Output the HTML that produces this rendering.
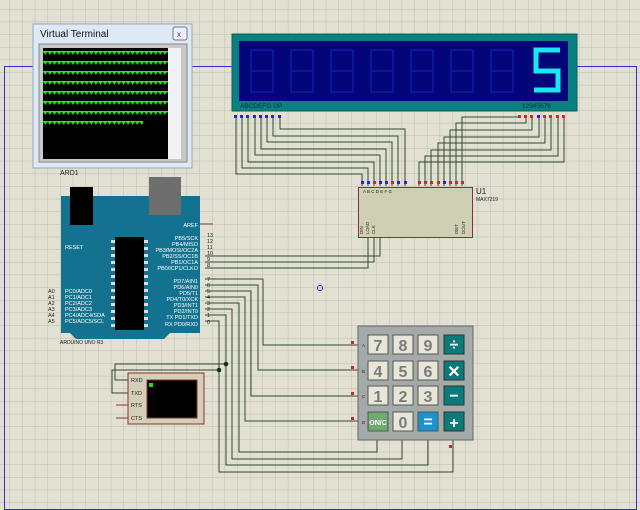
<!DOCTYPE html><html><head><style>body{margin:0;width:640px;height:510px;overflow:hidden;background:#e1e0d2}svg{display:block}text{font-family:"Liberation Sans",sans-serif}</style></head><body>
<svg width="640" height="510" viewBox="0 0 640 510" xmlns="http://www.w3.org/2000/svg">
<defs><pattern id="g" x="9.5" y="9" width="12.65" height="12.65" patternUnits="userSpaceOnUse"><path d="M0 0H12.65M0 0V12.65" stroke="#bdbdb0" stroke-width="1" fill="none"/></pattern>
<pattern id="t" x="43" y="0" width="4.6" height="10" patternUnits="userSpaceOnUse"><rect x="0" y="0" width="4.6" height="2.2" fill="#22ee22"/><polygon points="0.3,2 4.3,2 2.3,5" fill="#22dd22"/></pattern></defs>
<rect width="640" height="510" fill="#e1e0d2"/><rect width="640" height="510" fill="url(#g)"/>
<path d="M4.5 510V66.5H636.5V509.5H4" stroke="#3030d0" fill="none"/>
<!-- 7seg -->
<rect x="232" y="34" width="345" height="77" fill="#0b8080" stroke="#08605f"/>
<rect x="239" y="41" width="329" height="60" fill="#05057a"/>
<g fill="none" stroke="#0b169a" stroke-width="2">
<path d="M251 50h22v21h-22zM251 71h22v21h-22z"/><path d="M291 50h22v21h-22zM291 71h22v21h-22z"/><path d="M331 50h22v21h-22zM331 71h22v21h-22z"/><path d="M371 50h22v21h-22zM371 71h22v21h-22z"/><path d="M411 50h22v21h-22zM411 71h22v21h-22z"/><path d="M451 50h22v21h-22zM451 71h22v21h-22z"/><path d="M491 50h22v21h-22zM491 71h22v21h-22z"/></g>
<path d="M560 50H536V71H558V90H534" stroke="#18e8f0" stroke-width="5" fill="none"/>
<text x="240" y="108" font-size="6.5" fill="#003030">ABCDEFG  DP</text><text x="522" y="108" font-size="6.5" fill="#003030">12345678</text>
<g stroke="#2f4a2f" fill="none" stroke-width="1">
<path d="M236 117V174H362V186"/><path d="M242 117V168H368V186"/><path d="M248 117V162H374V186"/><path d="M255 117V155H380V186"/><path d="M261 117V149H386V186"/><path d="M267 117V142H392V186"/><path d="M273 117V136H398V186"/><path d="M280 117V129H405V186"/>
<path d="M419 186V162H564V117"/><path d="M425 186V156H558V117"/><path d="M431 186V150H551V117"/><path d="M438 186V143H545V117"/><path d="M444 186V137H539V117"/><path d="M450 186V130H532V117"/><path d="M456 186V123H526V117"/><path d="M462 186V117H520"/>
</g>
<g fill="#2020ff"><rect x="234" y="115" width="3" height="3"/><rect x="240" y="115" width="3" height="3"/><rect x="246" y="115" width="3" height="3"/><rect x="253" y="115" width="3" height="3"/><rect x="259" y="115" width="3" height="3"/><rect x="265" y="115" width="3" height="3"/><rect x="271" y="115" width="3" height="3"/><rect x="278" y="115" width="3" height="3"/></g>
<g fill="#e02020"><rect x="518" y="115" width="3" height="3"/><rect x="524" y="115" width="3" height="3"/><rect x="530" y="115" width="3" height="3"/><rect x="543" y="115" width="3" height="3"/><rect x="549" y="115" width="3" height="3"/><rect x="556" y="115" width="3" height="3"/><rect x="562" y="115" width="3" height="3"/></g>
<rect x="537" y="115" width="3" height="3" fill="#2020ff"/>
<!-- MAX7219 -->
<rect x="358.5" y="187.5" width="114" height="50" fill="#cfcfb4" stroke="#8a3030"/>
<text x="476" y="194" font-size="8" fill="#222">U1</text><text x="476" y="201" font-size="5" fill="#222">MAX7219</text>
<text x="363" y="193" font-size="4.5" fill="#222">A B C D E F G</text>
<text x="363" y="234" font-size="4.5" fill="#222" transform="rotate(-90 363 234)">DIN</text>
<text x="369" y="234" font-size="4.5" fill="#222" transform="rotate(-90 369 234)">LOAD</text>
<text x="375" y="234" font-size="4.5" fill="#222" transform="rotate(-90 375 234)">CLK</text>
<text x="458" y="234" font-size="4.5" fill="#222" transform="rotate(-90 458 234)">ISET</text>
<text x="465" y="234" font-size="4.5" fill="#222" transform="rotate(-90 465 234)">DOUT</text>
<g fill="#2020ff"><rect x="361" y="181" width="3" height="3"/><rect x="367" y="181" width="3" height="3"/><rect x="379" y="181" width="3" height="3"/><rect x="385" y="181" width="3" height="3"/><rect x="397" y="181" width="3" height="3"/><rect x="404" y="181" width="3" height="3"/><rect x="443" y="181" width="3" height="3"/></g>
<g fill="#e02020"><rect x="373" y="181" width="3" height="3"/><rect x="391" y="181" width="3" height="3"/><rect x="418" y="181" width="3" height="3"/><rect x="424" y="181" width="3" height="3"/><rect x="430" y="181" width="3" height="3"/><rect x="437" y="181" width="3" height="3"/><rect x="449" y="181" width="3" height="3"/><rect x="455" y="181" width="3" height="3"/><rect x="461" y="181" width="3" height="3"/></g>
<g stroke="#2f4a2f" fill="none">
<path d="M205 256H380V237"/><path d="M205 262H374V237"/><path d="M205 268H368V237"/>
<path d="M205 279H263V345H358"/><path d="M205 285H258V370H358"/><path d="M205 291H251V396H358"/><path d="M205 297H245V421H358"/>
<path d="M205 303H239V452H377V440"/><path d="M205 309H232V459H402V440"/><path d="M205 315H226V465H428V440"/><path d="M205 321H219V472H453V440"/>
<path d="M226 364H115V380H128"/><path d="M219 370H112V393H128"/>
</g>
<circle cx="226" cy="364" r="2.3" fill="#123012"/><circle cx="219" cy="370" r="2.3" fill="#123012"/>
<circle cx="320" cy="288" r="2.5" fill="none" stroke="#3030d0"/>
<!-- Arduino -->
<text x="60" y="175" font-size="7" fill="#222">ARD1</text>
<path d="M61 196H200V333H170L164 339H76L70 333H61Z" fill="#13728f"/>
<rect x="70" y="187" width="23" height="38" fill="#000"/>
<rect x="149" y="177" width="32" height="38" fill="#6e6e6e"/>
<rect x="115" y="237" width="29" height="93" fill="#000"/>
<g fill="#ddd"><rect x="111" y="240" width="4" height="3"/><rect x="111" y="247" width="4" height="3"/><rect x="111" y="254" width="4" height="3"/><rect x="111" y="261" width="4" height="3"/><rect x="111" y="268" width="4" height="3"/><rect x="111" y="275" width="4" height="3"/><rect x="111" y="282" width="4" height="3"/><rect x="111" y="289" width="4" height="3"/><rect x="111" y="296" width="4" height="3"/><rect x="111" y="303" width="4" height="3"/><rect x="111" y="310" width="4" height="3"/><rect x="111" y="317" width="4" height="3"/><rect x="111" y="324" width="4" height="3"/>
<rect x="144" y="240" width="4" height="3"/><rect x="144" y="247" width="4" height="3"/><rect x="144" y="254" width="4" height="3"/><rect x="144" y="261" width="4" height="3"/><rect x="144" y="268" width="4" height="3"/><rect x="144" y="275" width="4" height="3"/><rect x="144" y="282" width="4" height="3"/><rect x="144" y="289" width="4" height="3"/><rect x="144" y="296" width="4" height="3"/><rect x="144" y="303" width="4" height="3"/><rect x="144" y="310" width="4" height="3"/><rect x="144" y="317" width="4" height="3"/><rect x="144" y="324" width="4" height="3"/></g>
<g font-size="5.5" fill="#fff" text-anchor="end"><text x="198" y="227">AREF</text><text x="198" y="240">PB5/SCK</text><text x="198" y="246">PB4/MISO</text><text x="198" y="252">PB3/MOSI/OC2A</text><text x="198" y="258">PB2/SS/OC1B</text><text x="198" y="264">PB1/OC1A</text><text x="198" y="270">PB0/ICP1/CLKO</text><text x="198" y="283">PD7/AIN1</text><text x="198" y="289">PD6/AIN0</text><text x="198" y="295">PD5/T1</text><text x="198" y="301">PD4/T0/XCK</text><text x="198" y="307">PD3/INT1</text><text x="198" y="313">PD2/INT0</text><text x="198" y="319">TX PD1/TXD</text><text x="198" y="326">RX PD0/RXD</text></g>
<g font-size="5.5" fill="#fff"><text x="65" y="249">RESET</text><text x="65" y="293">PC0/ADC0</text><text x="65" y="299">PC1/ADC1</text><text x="65" y="305">PC2/ADC2</text><text x="65" y="311">PC3/ADC3</text><text x="65" y="317">PC4/ADC4/SDA</text><text x="65" y="323">PC5/ADC5/SCL</text></g>
<g font-size="5.5" fill="#222"><text x="48" y="293">A0</text><text x="48" y="299">A1</text><text x="48" y="305">A2</text><text x="48" y="311">A3</text><text x="48" y="317">A4</text><text x="48" y="323">A5</text><text x="60" y="344" font-size="5">ARDUINO UNO R3</text>
<text x="207" y="237">13</text><text x="207" y="243">12</text><text x="207" y="249">11</text><text x="207" y="255">10</text><text x="207" y="261">9</text><text x="207" y="267">8</text><text x="207" y="281">7</text><text x="207" y="287">6</text><text x="207" y="293">5</text><text x="207" y="299">4</text><text x="207" y="305">3</text><text x="207" y="311">2</text><text x="207" y="317">1</text><text x="207" y="324">0</text></g>
<path d="M200 224H213" stroke="#8a3030"/>
<!-- keypad -->
<rect x="358" y="326" width="115" height="114" fill="#a4aaa8" stroke="#666"/>
<g font-size="16" font-weight="bold" text-anchor="middle">
<g fill="#e8e6d8" stroke="#555"><rect x="368" y="335" width="20" height="19"/><rect x="393" y="335" width="20" height="19"/><rect x="418" y="335" width="20" height="19"/><rect x="368" y="361" width="20" height="19"/><rect x="393" y="361" width="20" height="19"/><rect x="418" y="361" width="20" height="19"/><rect x="368" y="386" width="20" height="19"/><rect x="393" y="386" width="20" height="19"/><rect x="418" y="386" width="20" height="19"/><rect x="393" y="412" width="20" height="19"/></g>
<g fill="#7a7a7a"><text x="378" y="351">7</text><text x="403" y="351">8</text><text x="428" y="351">9</text><text x="378" y="377">4</text><text x="403" y="377">5</text><text x="428" y="377">6</text><text x="378" y="402">1</text><text x="403" y="402">2</text><text x="428" y="402">3</text><text x="403" y="428">0</text></g>
<rect x="368" y="412" width="20" height="19" fill="#6faa6f" stroke="#555"/><text x="378" y="425" font-size="7" fill="#fff">ON/C</text>
<rect x="418" y="412" width="20" height="19" fill="#1b93d0" stroke="#555"/><text x="428" y="427" fill="#fff">=</text>
<g fill="#fff"><rect x="444" y="335" width="20" height="19" fill="#0b7a78" stroke="#333"/><text x="454" y="350">÷</text>
<rect x="444" y="361" width="20" height="19" fill="#0b7a78" stroke="#333"/><text x="454" y="377">✕</text>
<rect x="444" y="386" width="20" height="19" fill="#0b7a78" stroke="#333"/><text x="454" y="401">−</text>
<rect x="444" y="412" width="20" height="19" fill="#0b7a78" stroke="#333"/><text x="454" y="428">+</text></g></g>
<g font-size="4.5" fill="#222"><text x="362" y="347">A</text><text x="362" y="373">B</text><text x="362" y="398">C</text><text x="362" y="424">D</text></g>
<g fill="#e02020"><rect x="351" y="341" width="3" height="3"/><rect x="351" y="366" width="3" height="3"/><rect x="351" y="392" width="3" height="3"/><rect x="351" y="417" width="3" height="3"/><rect x="449" y="445" width="3" height="3"/></g>
<!-- small VT -->
<rect x="128" y="373" width="76" height="51" fill="#d4d0b8" stroke="#8a3030"/>
<rect x="147" y="380" width="50" height="38" fill="#000" stroke="#8a3030"/>
<rect x="149" y="383" width="4" height="4" fill="#20e020"/>
<g font-size="5.5" fill="#222"><text x="131" y="382">RXD</text><text x="131" y="395">TXD</text><text x="131" y="407">RTS</text><text x="131" y="420">CTS</text></g>
<path d="M116 405H128M116 418H128" stroke="#8a3030"/>
<!-- Virtual terminal window -->
<rect x="33" y="24" width="159" height="144" fill="#dde9f4" stroke="#9aa8b8"/>
<text x="40" y="37" font-size="10" fill="#111">Virtual Terminal</text>
<rect x="173" y="27" width="14" height="13" fill="#eef" stroke="#777" rx="2"/><text x="177" y="37" font-size="8" fill="#333">x</text>
<rect x="39" y="44" width="148" height="118" fill="#c8c8c8" stroke="#888"/>
<rect x="43" y="48" width="125" height="111" fill="#000"/>
<rect x="168" y="48" width="13" height="111" fill="#f2f2f2"/>
<g fill="url(#t)"><rect x="43" y="51" width="125" height="5"/><rect x="43" y="61" width="125" height="5"/><rect x="43" y="71" width="125" height="5"/><rect x="43" y="81" width="125" height="5"/><rect x="43" y="91" width="125" height="5"/><rect x="43" y="101" width="125" height="5"/><rect x="43" y="111" width="125" height="5"/><rect x="43" y="121" width="100" height="5"/></g>
</svg></body></html>
